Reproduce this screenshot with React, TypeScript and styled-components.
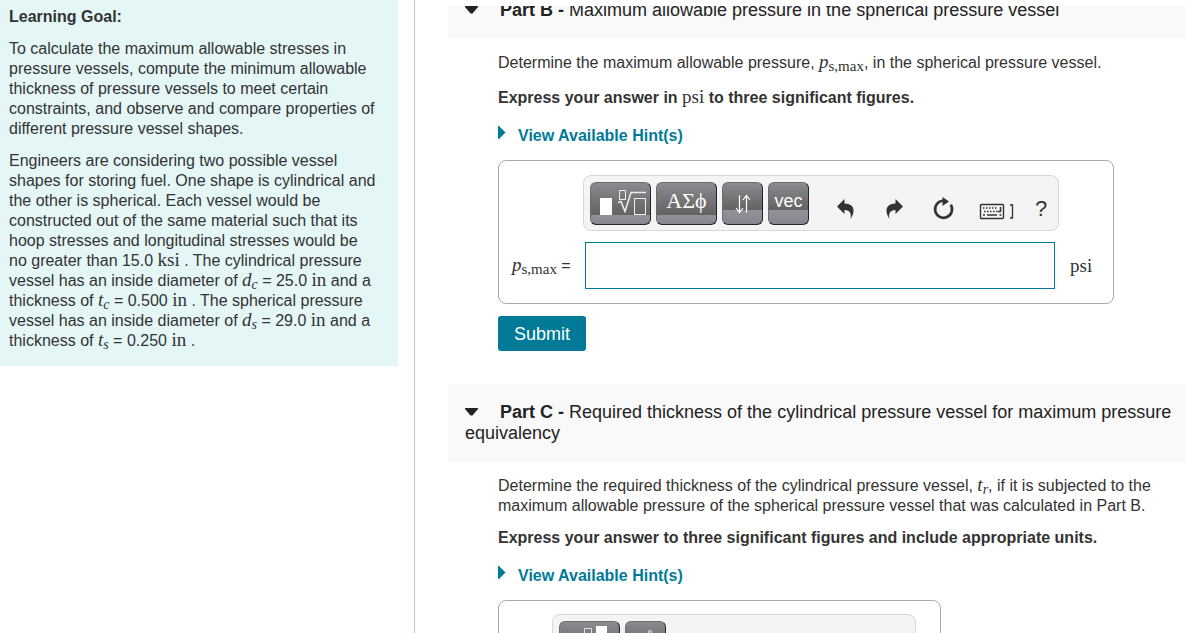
import React from "react";
import styled, { createGlobalStyle } from "styled-components";

const sans = `"Liberation Sans", Arial, Helvetica, sans-serif`;
const serif = `"Liberation Serif", "Times New Roman", serif`;

const GlobalStyle = createGlobalStyle`
  *, *::before, *::after { box-sizing: border-box; }
  body {
    margin: 0;
    background: #fff;
    color: #333;
    font: 16px/20px ${sans};
  }
  button, input { font-family: inherit; }
`;

const Page = styled.div`
  display: flex;
  height: 100vh;
  overflow: hidden;
`;

const Sidebar = styled.aside`
  flex: none;
  width: 415px;
  padding-right: 16px;
  border-right: 1px solid #b5c9d8;
`;

const Goal = styled.section`
  padding: 7px 20px 15px 9px;
  background: #e4f6f6;
`;

const GoalTitle = styled.h2`
  margin: 0;
  font-size: 16px;
  line-height: 20px;
`;

const GoalText = styled.p`
  margin: 12px 0 0;
`;

const Main = styled.main`
  flex: 1;
  min-width: 0;
  margin: 6px 6px 0 33px;
  overflow: hidden;
`;

const Part = styled.section<{ $scrolled?: boolean }>`
  margin-top: ${(p) => (p.$scrolled ? "-24px" : "33px")};
`;

const PartHeader = styled.h2`
  margin: 0;
  padding: 18px 12px 18px 17px;
  background: #f9f9f9;
  color: #222;
  font-size: 18px;
  font-weight: 400;
  line-height: 21px;
`;

const Caret = styled.svg`
  width: 13px;
  height: 8px;
  margin-right: 22px;
  vertical-align: 2px;
`;

const PartBody = styled.div`
  padding: 14px 17px 0 50px;
`;

const Prompt = styled.p<{ $roomy?: boolean }>`
  margin: 0 0 ${(p) => (p.$roomy ? "15px" : "12px")};
`;

const Instruction = styled.p`
  margin: 0 0 18px;
  font-weight: 700;
`;

const HintLink = styled.a`
  display: flex;
  width: fit-content;
  gap: 12px;
  margin-bottom: 14px;
  color: #007a96;
  font-weight: 700;
  text-decoration: none;
`;

const HintArrow = styled.svg`
  width: 8px;
  height: 14px;
`;

const MathText = styled.span`
  font-family: ${serif};
  font-size: 19px;
  font-weight: 400;
  line-height: 0;
  white-space: nowrap;
`;

const Sub = styled.span<{ $italic?: boolean }>`
  position: relative;
  top: 3px;
  font-size: ${(p) => (p.$italic ? "14px" : "15px")};
  font-style: ${(p) => (p.$italic ? "italic" : "normal")};
`;

const AnswerBox = styled.div`
  display: grid;
  grid-template-columns: auto auto auto;
  width: fit-content;
  max-width: 100%;
  padding: 14px 21px 14px 13px;
  border: 1px solid #aaa;
  border-radius: 8px;
  align-items: center;
  row-gap: 11px;
`;

const UnitAnswerBox = styled.div`
  width: 443px;
  max-width: 100%;
  padding: 13px 24px 14px 53px;
  border: 1px solid #aaa;
  border-radius: 8px;
`;

const AnswerLabel = styled.label`
  grid-column: 1;
  width: 71px;
  white-space: nowrap;
`;

const Toolbar = styled.div`
  display: flex;
  grid-column: 2;
  align-items: center;
  gap: 5px;
  height: 56px;
  padding: 0 1px 0 6px;
  border: 1px solid #d8d8d8;
  border-radius: 8px;
  background: #f4f4f4;
`;

const ToolButton = styled.button<{ $narrow?: boolean }>`
  display: flex;
  align-items: center;
  justify-content: center;
  flex: none;
  width: ${(p) => (p.$narrow ? "41px" : "61px")};
  height: 43px;
  padding: 0 0 4px;
  border: 1px solid;
  border-color: #6c6c70 #242424 #242424 #6c6c70;
  border-radius: 6px;
  background: linear-gradient(
    #8b8b90 0,
    #626262 ${(p) => (p.$narrow ? "27px" : "32px")},
    #93929b ${(p) => (p.$narrow ? "27px" : "32px")},
    #87868e 100%
  );
  color: #fff;
  font-family: ${sans};
  font-size: 18px;
  line-height: 20px;
`;

const Greek = styled.span`
  font-family: ${serif};
  font-size: 22px;
`;

const Micro = styled.span`
  font-family: ${serif};
`;

const ToolGlyph = styled.svg`
  flex: none;
  height: 40px;
  margin-bottom: -4px;
`;

const IconGroup = styled.div`
  display: flex;
  margin-left: 7px;
`;

const IconButton = styled.button<{ $width: number }>`
  display: flex;
  justify-content: center;
  width: ${(p) => p.$width}px;
  height: 43px;
  padding: 0;
  border: 0;
  background: none;
  color: #333;
`;

const Question = styled.span`
  padding-top: 15px;
  font-size: 22px;
  line-height: 24px;
`;

const AnswerInput = styled.input`
  width: 470px;
  height: 47px;
  margin: 0 4px 0 2px;
  padding: 0 8px;
  border: 1px solid #007a96;
  border-radius: 0;
  background: #fff;
  font-size: 18px;
`;

const Unit = styled(MathText)`
  margin-left: 11px;
`;

const SubmitButton = styled.button`
  display: block;
  height: 35px;
  margin-top: 12px;
  padding: 0 16px;
  border: 0;
  border-radius: 3px;
  background: #007a96;
  color: #fff;
  font-size: 18px;
  line-height: 20px;
`;

function Symbol({ base, sub, roman }: { base: string; sub: string; roman?: boolean }) {
  return (
    <MathText>
      <i>{base}</i>
      <Sub $italic={!roman}>{sub}</Sub>
    </MathText>
  );
}

function HeaderCaret() {
  return (
    <Caret viewBox="0 0 13 8" aria-hidden="true">
      <path d="M0 0h13v1L7.5 7.5h-2L0 1z" fill="#222" />
    </Caret>
  );
}

function Hints() {
  return (
    <HintLink href="#hints">
      <HintArrow viewBox="0 0 8 14" aria-hidden="true">
        <path d="M0 0h1l6.5 6.5L1 13H0z" fill="#007a96" />
      </HintArrow>
      View Available Hint(s)
    </HintLink>
  );
}

function RootGlyph() {
  return (
    <ToolGlyph width="56" viewBox="0 0 56 40" aria-hidden="true">
      <rect x="7" y="15" width="12" height="17" fill="#fff" />
      <g fill="none" stroke="#eee">
        <rect x="26.5" y="7.5" width="6" height="9" />
        <path d="M25 19.5l3-1 4 10 6-19h15" strokeWidth="1.5" />
        <rect x="41.5" y="15.5" width="11" height="16" />
      </g>
    </ToolGlyph>
  );
}

function FractionGlyph() {
  return (
    <ToolGlyph width="56" viewBox="0 0 56 40" aria-hidden="true">
      <rect x="22.5" y="6.5" width="7" height="10" fill="none" stroke="#ddd" />
      <rect x="34" y="4" width="11" height="14" fill="#fff" />
    </ToolGlyph>
  );
}

function UpDownGlyph() {
  return (
    <ToolGlyph width="20" viewBox="0 0 20 40" fill="none" stroke="#fff" strokeWidth="1.2" aria-hidden="true">
      <path d="M6.500 12v17M3 25l3.500 4.500L10 25M13.500 29.500v-17M10 17l3.500-4.500L17 17" />
    </ToolGlyph>
  );
}

function UndoGlyph({ flip }: { flip?: boolean }) {
  return (
    <svg width="49" height="43" viewBox="0 0 49 43" aria-hidden="true">
      <path
        transform={flip ? "translate(49 0) scale(-1 1)" : undefined}
        d="M16 24.500L23.500 17v4.500c6 0 9 3 9 7 0 3-1 5.500-3 8.500 1.200-5.500-.5-9-6-9V32z"
        fill="#333"
      />
    </svg>
  );
}

function ResetGlyph() {
  return (
    <svg width="49" height="43" viewBox="0 0 49 43" aria-hidden="true">
      <path d="M25 18.800a8.500 8.500 0 1 0 6.800 4" fill="none" stroke="#333" strokeWidth="2.600" />
      <path d="M23.500 15l6.500 4.500-6.500 4.500z" fill="#333" />
    </svg>
  );
}

function KeyboardGlyph() {
  return (
    <svg width="36" height="43" viewBox="0 0 36 43" fill="none" stroke="#333" aria-hidden="true">
      <rect x="1.500" y="22.500" width="23" height="14" rx="1" strokeWidth="1.400" />
      <path d="M4 26h15M5 29.500h13" strokeWidth="1.500" strokeDasharray="1.500 1.500" />
      <path d="M21.500 25v4.500h-3M8 33h10" strokeWidth="1.500" />
      <path d="M4 33h2M20.500 33h2" strokeWidth="1.500" />
      <path d="M31 23h2.500v13H31" strokeWidth="1.300" />
    </svg>
  );
}

export default function App() {
  return (
    <>
      <GlobalStyle />
      <Page>
        <Sidebar>
          <Goal>
            <GoalTitle>Learning Goal:</GoalTitle>
            <GoalText>
              To calculate the maximum allowable stresses in pressure vessels, compute the minimum
              allowable thickness of pressure vessels to meet certain constraints, and observe and
              compare properties of different pressure vessel shapes.
            </GoalText>
            <GoalText>
              Engineers are considering two possible vessel shapes for storing fuel. One shape is
              cylindrical and the other is spherical. Each vessel would be constructed out of the
              same material such that its hoop stresses and longitudinal stresses would be no
              greater than 15.0 <MathText>ksi</MathText> . The cylindrical pressure vessel has an
              inside diameter of <Symbol base="d" sub="c" /> = 25.0 <MathText>in</MathText> and a
              thickness of <Symbol base="t" sub="c" /> = 0.500 <MathText>in</MathText> . The
              spherical pressure vessel has an inside diameter of <Symbol base="d" sub="s" /> = 29.0{" "}
              <MathText>in</MathText> and a thickness of <Symbol base="t" sub="s" /> = 0.250{" "}
              <MathText>in</MathText> .
            </GoalText>
          </Goal>
        </Sidebar>

        <Main>
          <Part $scrolled>
            <PartHeader>
              <HeaderCaret />
              <b>Part B - </b>
              Maximum allowable pressure in the spherical pressure vessel
            </PartHeader>
            <PartBody>
              <Prompt $roomy>
                Determine the maximum allowable pressure, <Symbol base="p" sub="s,max" roman />, in
                the spherical pressure vessel.
              </Prompt>
              <Instruction>
                Express your answer in <MathText>psi</MathText> to three significant figures.
              </Instruction>
              <Hints />
              <AnswerBox>
                <Toolbar role="toolbar" aria-label="Equation tools">
                  <ToolButton aria-label="Templates">
                    <RootGlyph />
                  </ToolButton>
                  <ToolButton aria-label="Greek symbols">
                    <Greek>ΑΣϕ</Greek>
                  </ToolButton>
                  <ToolButton $narrow aria-label="Subscript and superscript">
                    <UpDownGlyph />
                  </ToolButton>
                  <ToolButton $narrow>vec</ToolButton>
                  <IconGroup>
                    <IconButton $width={49} aria-label="Undo">
                      <UndoGlyph />
                    </IconButton>
                    <IconButton $width={49} aria-label="Redo">
                      <UndoGlyph flip />
                    </IconButton>
                    <IconButton $width={49} aria-label="Reset">
                      <ResetGlyph />
                    </IconButton>
                    <IconButton $width={58} aria-label="Keyboard shortcuts">
                      <KeyboardGlyph />
                    </IconButton>
                    <IconButton $width={30} aria-label="Help">
                      <Question>?</Question>
                    </IconButton>
                  </IconGroup>
                </Toolbar>
                <AnswerLabel htmlFor="answer-b">
                  <Symbol base="p" sub="s,max" roman /> =
                </AnswerLabel>
                <AnswerInput id="answer-b" type="text" />
                <Unit>psi</Unit>
              </AnswerBox>
              <SubmitButton type="submit">Submit</SubmitButton>
            </PartBody>
          </Part>

          <Part>
            <PartHeader>
              <HeaderCaret />
              <b>Part C - </b>
              Required thickness of the cylindrical pressure vessel for maximum pressure equivalency
            </PartHeader>
            <PartBody>
              <Prompt>
                Determine the required thickness of the cylindrical pressure vessel,{" "}
                <Symbol base="t" sub="r" />, if it is subjected to the maximum allowable pressure of
                the spherical pressure vessel that was calculated in Part B.
              </Prompt>
              <Instruction>
                Express your answer to three significant figures and include appropriate units.
              </Instruction>
              <Hints />
              <UnitAnswerBox>
                <Toolbar role="toolbar" aria-label="Equation and unit tools">
                  <ToolButton aria-label="Templates">
                    <FractionGlyph />
                  </ToolButton>
                  <ToolButton $narrow aria-label="Units">
                    <Micro>μÅ</Micro>
                  </ToolButton>
                </Toolbar>
              </UnitAnswerBox>
            </PartBody>
          </Part>
        </Main>
      </Page>
    </>
  );
}
